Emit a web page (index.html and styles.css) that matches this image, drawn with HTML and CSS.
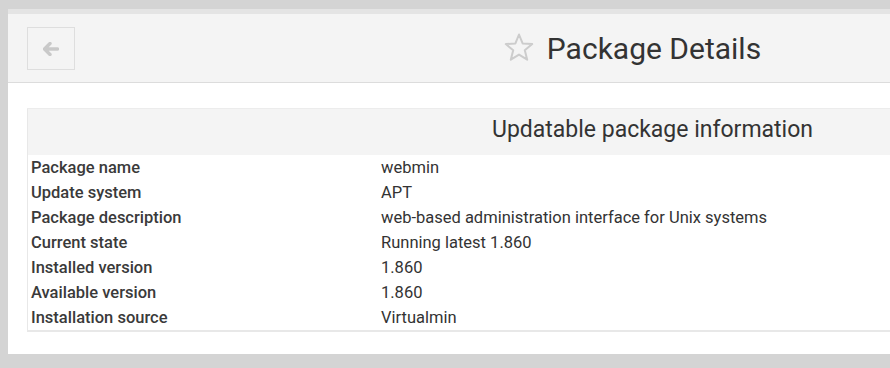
FILE: index.html
```html
<!DOCTYPE html>
<html lang="en">
<head>
    <meta charset="UTF-8">
    <meta name="viewport" content="width=device-width, initial-scale=1.0">
    <title>Package Details</title>
    <link rel="stylesheet" href="styles.css">
</head>
<body>
    <div class="panel">
        <div class="panel-header">
            <a class="back-btn" href="#" title="Back">
                <svg width="16" height="14" viewBox="0 0 16 14">
                    <path d="M7 1.5 L1.5 7 L7 12.5 M2 7 H14.5" fill="none" stroke="#c9c9c9" stroke-width="3.4" stroke-linejoin="round" stroke-linecap="round"/>
                </svg>
            </a>
            <h1 class="page-title">
                <svg class="star" width="32" height="31" viewBox="0 0 32 31">
                    <path d="M16 2.5 L19.6 11.4 L29.2 12.1 L21.8 18.3 L24.2 27.7 L16 22.6 L7.8 27.7 L10.2 18.3 L2.8 12.1 L12.4 11.4 Z" fill="none" stroke="#cccccc" stroke-width="2" stroke-linejoin="round"/>
                </svg>
                Package Details
            </h1>
        </div>

        <div class="panel-body">
            <table class="info-table">
                <thead>
                    <tr><th colspan="2">Updatable package information</th></tr>
                </thead>
                <tbody>
                    <tr><td class="label">Package name</td><td>webmin</td></tr>
                    <tr><td class="label">Update system</td><td>APT</td></tr>
                    <tr><td class="label">Package description</td><td>web-based administration interface for Unix systems</td></tr>
                    <tr><td class="label">Current state</td><td>Running latest 1.860</td></tr>
                    <tr><td class="label">Installed version</td><td>1.860</td></tr>
                    <tr><td class="label">Available version</td><td>1.860</td></tr>
                    <tr><td class="label">Installation source</td><td>Virtualmin</td></tr>
                </tbody>
            </table>
        </div>
    </div>
</body>
</html>
```

FILE: styles.css
```css
html, body {
    overflow: hidden;
}

body {
    margin: 0;
    padding: 9px 0 0 8px;
    background-color: #d4d4d4;
    font-family: Roboto, "Liberation Sans", sans-serif;
    color: #333;
}

/* Main panel */
.panel {
    width: 1288px;
    height: 345px;
    background-color: #fff;
    border-top: 5px solid #e4e4e4;
    box-sizing: border-box;
}

.panel-header {
    display: flex;
    align-items: center;
    height: 69px;
    padding: 0 19px;
    background-color: #f4f4f4;
    border-bottom: 1px solid #dcdcdc;
    box-sizing: border-box;
}

.back-btn {
    display: flex;
    align-items: center;
    justify-content: center;
    width: 48px;
    height: 43px;
    margin-top: 1px;
    border: 1px solid #dedede;
    box-sizing: border-box;
}

.page-title {
    flex: 1;
    display: flex;
    align-items: center;
    justify-content: center;
    gap: 12px;
    margin: 0 88px 0 0;
    font-size: 30px;
    font-weight: 400;
    color: #333;
}

.star {
    margin-top: -1px;
}

/* Info table */
.panel-body {
    padding: 25px 19px 0 19px;
}

.info-table {
    width: 100%;
    border-collapse: collapse;
    border-left: 1px solid #e8e8e8;
    border-bottom: 2px solid #e8e8e8;
    font-size: 16.5px;
}

.info-table th {
    height: 46px;
    padding: 0 0 4px 0;
    background-color: #f4f4f4;
    border-top: 1px solid #ececec;
    font-size: 23px;
    font-weight: 400;
    text-align: center;
    vertical-align: middle;
    color: #333;
    box-sizing: border-box;
}

.info-table td {
    height: 25px;
    padding: 0 3px;
    vertical-align: middle;
    line-height: 25px;
}

.info-table td.label {
    width: 344px;
    font-weight: 500;
    color: #3a3a3a;
}
```
